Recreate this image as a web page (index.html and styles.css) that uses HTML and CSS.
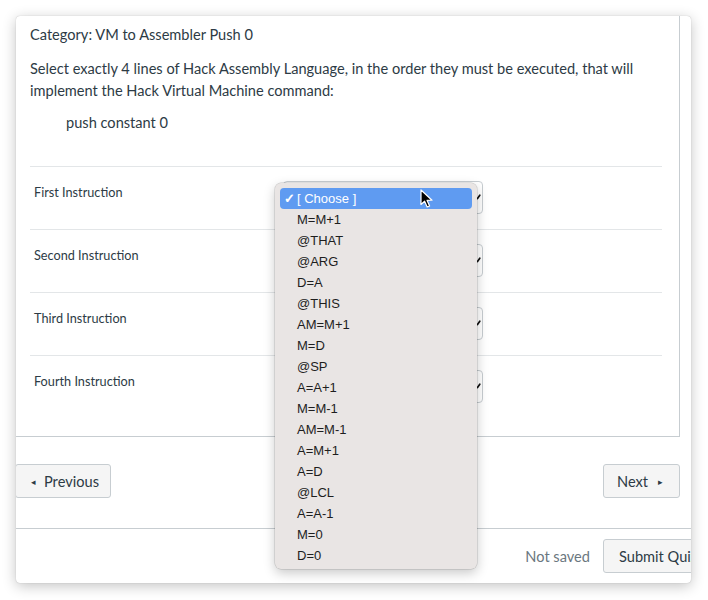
FILE: index.html
```html
<!DOCTYPE html>
<html lang="en">
<head>
<meta charset="utf-8">
<title>Quiz</title>
<link rel="stylesheet" href="styles.css">
</head>
<body>
<div class="window">
  <div class="question">
    <p class="category">Category: VM to Assembler Push 0</p>
    <p class="prompt">Select exactly 4 lines of Hack Assembly Language, in the order they must be executed, that will implement the Hack Virtual Machine command:</p>
    <p class="command">push constant 0</p>
    <div class="answers">
      <div class="row">
        <span class="label">First Instruction</span>
        <div class="select"><svg class="chev" width="7" height="7" viewBox="0 0 7 7"><path d="M2.5 5.5 L4.8 2.2" fill="none" stroke="#111" stroke-width="1.7" stroke-linecap="round"/></svg></div>
      </div>
      <div class="row">
        <span class="label">Second Instruction</span>
        <div class="select"><svg class="chev" width="7" height="7" viewBox="0 0 7 7"><path d="M2.5 5.5 L4.8 2.2" fill="none" stroke="#111" stroke-width="1.7" stroke-linecap="round"/></svg></div>
      </div>
      <div class="row">
        <span class="label">Third Instruction</span>
        <div class="select"><svg class="chev" width="7" height="7" viewBox="0 0 7 7"><path d="M2.5 5.5 L4.8 2.2" fill="none" stroke="#111" stroke-width="1.7" stroke-linecap="round"/></svg></div>
      </div>
      <div class="row">
        <span class="label">Fourth Instruction</span>
        <div class="select"><svg class="chev" width="7" height="7" viewBox="0 0 7 7"><path d="M2.5 5.5 L4.8 2.2" fill="none" stroke="#111" stroke-width="1.7" stroke-linecap="round"/></svg></div>
      </div>
    </div>
  </div>
  <div class="nav">
    <button class="btn prev"><span class="tri">&#9666;</span>Previous</button>
    <button class="btn next">Next<span class="tri">&#9656;</span></button>
  </div>
  <div class="footer">
    <span class="status">Not saved</span>
    <button class="btn submit">Submit Quiz</button>
  </div>
</div>

<ul class="popup">
  <li class="opt selected"><span class="check">&#10003;</span>[ Choose ]</li>
  <li class="opt">M=M+1</li>
  <li class="opt">@THAT</li>
  <li class="opt">@ARG</li>
  <li class="opt">D=A</li>
  <li class="opt">@THIS</li>
  <li class="opt">AM=M+1</li>
  <li class="opt">M=D</li>
  <li class="opt">@SP</li>
  <li class="opt">A=A+1</li>
  <li class="opt">M=M-1</li>
  <li class="opt">AM=M-1</li>
  <li class="opt">A=M+1</li>
  <li class="opt">A=D</li>
  <li class="opt">@LCL</li>
  <li class="opt">A=A-1</li>
  <li class="opt">M=0</li>
  <li class="opt">D=0</li>
</ul>

<svg class="cursor" width="14" height="20" viewBox="0 0 14 20">
  <path d="M1 1 L1 15.5 L4.6 12.2 L7.2 18 L9.6 17 L7.1 11.4 L12 11.2 Z" fill="#000" stroke="#fff" stroke-width="1.2" stroke-linejoin="round"/>
</svg>
</body>
</html>
```
FILE: styles.css
```css
html, body {
  margin: 0;
  padding: 0;
  background: #ffffff;
}
body {
  width: 708px;
  height: 600px;
  position: relative;
  overflow: hidden;
  font-family: Lato, "Liberation Sans", sans-serif;
  color: #2d3b45;
}
.window {
  margin: 16px 0 0 16px;
  width: 675px;
  height: 567px;
  background: #fff;
  border-radius: 4px;
  box-shadow: 0 3px 14px rgba(0, 0, 0, 0.24), 0 0 1px rgba(0, 0, 0, 0.3);
  overflow: hidden;
  display: flex;
  flex-direction: column;
}
.question {
  box-sizing: border-box;
  width: 664px;
  height: 421px;
  flex: none;
  border-right: 1px solid #c7cdd1;
  border-bottom: 1px solid #c7cdd1;
  padding: 8px 17px 0 14px;
}
.question p {
  margin: 0;
  font-size: 14.6px;
  line-height: 22px;
}
.prompt {
  margin-top: 12px !important;
}
.command {
  margin-top: 10px !important;
  padding-left: 36px;
}
.answers {
  margin-top: 32px;
  border-top: 1px solid #e3e6e8;
}
.row {
  display: flex;
  align-items: flex-start;
  height: 62px;
  padding-left: 4px;
  border-bottom: 1px solid #e3e6e8;
}
.row:last-child {
  border-bottom: none;
}
.label {
  width: 249px;
  flex: none;
  margin-top: 17px;
  font-size: 12.7px;
  line-height: 16px;
}
.select {
  box-sizing: border-box;
  margin-top: 14px;
  width: 200px;
  height: 33px;
  border: 1px solid #c7cdd1;
  border-radius: 4px;
  background: #fff;
  display: flex;
  align-items: center;
  justify-content: flex-end;
  padding-right: 0;
  padding-bottom: 2px;
}
.chev {
  display: block;
}
.nav {
  box-sizing: border-box;
  display: flex;
  justify-content: space-between;
  padding: 27px 0 0 0;
  height: 92px;
  flex: none;
  border-bottom: 1px solid #c7cdd1;
  width: 100%;
}
.btn {
  font-family: Lato, "Liberation Sans", sans-serif;
  font-size: 14.6px;
  color: #2d3b45;
  background: #f5f5f5;
  border: 1px solid #c7cdd1;
  border-radius: 3px;
  height: 34px;
  padding: 0 14px;
  display: flex;
  align-items: center;
  white-space: nowrap;
}
.prev {
  margin-left: -1px;
  width: 96px;
  padding-left: 15px;
}
.next {
  width: 77px;
  margin-right: 11px;
  padding-left: 13px;
}
.tri {
  font-size: 9px;
  color: #2d3b45;
}
.prev .tri {
  margin-right: 8px;
}
.next .tri {
  margin-left: 10px;
}
.footer {
  display: flex;
  justify-content: flex-end;
  align-items: center;
  padding-top: 10px;
}
.status {
  font-size: 14.6px;
  color: #6b7780;
  margin-right: 13px;
}
.submit {
  padding-left: 15px;
  margin-right: -30px;
  width: 118px;
}
.popup {
  position: absolute;
  left: 275px;
  top: 183px;
  width: 202px;
  height: 386px;
  box-sizing: border-box;
  margin: 0;
  padding: 5px 5px 3px 5px;
  list-style: none;
  background: #e9e5e4;
  border-radius: 6px;
  box-shadow: 0 4px 12px rgba(0, 0, 0, 0.22), 0 0 0 0.5px rgba(0, 0, 0, 0.18);
  font-family: "Liberation Sans", Arial, sans-serif;
  font-size: 13px;
  color: #1e1e1e;
}
.opt {
  height: 21px;
  line-height: 21px;
  padding-left: 17px;
  border-radius: 4px;
  position: relative;
}
.opt.selected {
  background: #5f9bf1;
  color: #fff;
}
.check {
  position: absolute;
  left: 4px;
  top: 0;
  font-size: 13px;
  font-weight: bold;
}
.cursor {
  position: absolute;
  left: 420px;
  top: 189px;
}
```
